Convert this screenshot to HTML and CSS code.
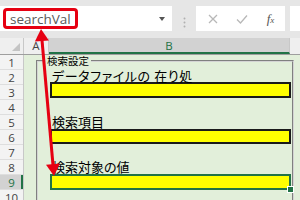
FILE: index.html
```html
<!DOCTYPE html>
<html lang="ja">
<head>
    <meta charset="UTF-8">
    <meta name="viewport" content="width=device-width, initial-scale=1.0">
    <title>検索設定</title>
    <link rel="stylesheet" href="styles.css">
</head>
<body>
    <div class="app">
        <div class="toolbar">
            <div class="namebox">
                <span class="name">searchVal</span>
                <span class="caret"></span>
            </div>
            <div class="grip">
                <svg width="3" height="11" viewBox="0 0 3 11"><circle cx="1.5" cy="1.5" r="1" fill="#b0b0b0"/><circle cx="1.5" cy="5.5" r="1" fill="#b0b0b0"/><circle cx="1.5" cy="9.5" r="1" fill="#b0b0b0"/></svg>
            </div>
            <div class="fxbtns">
                <div class="btn">
                    <svg width="10" height="10" viewBox="0 0 10 10"><path d="M1 1L9 9M9 1L1 9" stroke="#b8b8b8" stroke-width="1.3"/></svg>
                </div>
                <div class="btn">
                    <svg width="12" height="10" viewBox="0 0 12 10"><path d="M1 5.5L4.5 9L11 1.5" fill="none" stroke="#b8b8b8" stroke-width="1.3"/></svg>
                </div>
                <div class="btn"><span class="fx">f<small>x</small></span></div>
            </div>
            <div class="formula"></div>
        </div>

        <div class="colheads">
            <div class="corner"><span class="tri"></span></div>
            <div class="colh">A</div>
            <div class="colh sel">B</div>
            <div class="colh rest"></div>
        </div>

        <div class="sheet">
            <div class="rownums">
                <div class="rownum">1</div>
                <div class="rownum">2</div>
                <div class="rownum">3</div>
                <div class="rownum">4</div>
                <div class="rownum">5</div>
                <div class="rownum">6</div>
                <div class="rownum">7</div>
                <div class="rownum">8</div>
                <div class="rownum sel">9</div>
                <div class="rownum">10</div>
            </div>
            <div class="cells">
                <fieldset class="group">
                    <legend>検索設定</legend>
                    <div class="label wide">データファイルの 在り処</div>
                    <div class="input"></div>
                    <div class="label second">検索項目</div>
                    <div class="input short"></div>
                    <div class="label third">検索対象の値</div>
                    <div class="input active"></div>
                </fieldset>
            </div>
        </div>

        <svg class="arrow" width="300" height="200" viewBox="0 0 300 200">
            <line x1="41.9" y1="39" x2="53" y2="165" stroke="#e60012" stroke-width="3"/>
            <polygon points="41,29 48.9,40.4 34.9,41.6" fill="#e60012"/>
            <polygon points="54,176 59.9,163.4 46,164.7" fill="#e60012"/>
        </svg>
    </div>
</body>
</html>
```

FILE: styles.css
```css
body {
    margin: 0;
    font-family: "Open Sans", "Noto Sans CJK JP", sans-serif;
}

.app {
    width: 300px;
    height: 200px;
    overflow: hidden;
    position: relative;
    background: #e6e6e6;
}

/* name box + formula bar */
.toolbar {
    display: flex;
    height: 38px;
    box-sizing: border-box;
    padding-top: 6px;
}

.namebox {
    width: 172px;
    height: 25px;
    background: #fff;
    display: flex;
    align-items: center;
    box-sizing: border-box;
    padding-left: 3px;
}

.name {
    display: flex;
    align-items: center;
    width: 75px;
    height: 21px;
    box-sizing: border-box;
    border: 3px solid #e60012;
    border-radius: 4px;
    padding-left: 4px;
    font-size: 13.5px;
    color: #5a5a5a;
}

.caret {
    margin-left: auto;
    margin-right: 7px;
    border-left: 3px solid transparent;
    border-right: 3px solid transparent;
    border-top: 4px solid #555;
}

.grip {
    width: 24px;
    display: flex;
    align-items: center;
    justify-content: center;
}

.fxbtns {
    width: 89px;
    height: 25px;
    background: #fff;
    display: flex;
    box-sizing: border-box;
    padding-left: 2px;
}

.btn {
    width: 29px;
    display: flex;
    align-items: center;
    justify-content: center;
}

.fx {
    font-family: "Liberation Serif", serif;
    font-style: italic;
    font-size: 13px;
    color: #555;
}

.fx small {
    font-size: 9px;
}

.formula {
    flex: 1;
    height: 25px;
    margin-left: 5px;
    background: #fff;
}

/* column headers */
.colheads {
    display: flex;
    height: 17px;
    box-sizing: border-box;
    border-bottom: 1px solid #9e9e9e;
    font-size: 11.5px;
}

.corner {
    width: 24px;
    background: #efefef;
    border-right: 1px solid #c8c8c8;
    box-sizing: border-box;
    position: relative;
}

.tri {
    position: absolute;
    right: 3px;
    bottom: 3px;
    border-left: 8px solid transparent;
    border-bottom: 8px solid #c4c4c4;
}

.colh {
    width: 25px;
    background: #efefef;
    border-right: 1px solid #c8c8c8;
    box-sizing: border-box;
    text-align: center;
    line-height: 16px;
    color: #444;
}

.colh.sel {
    width: 241px;
    background: #d2d2d2;
    color: #217346;
    border-bottom: 2px solid #217346;
    line-height: 16px;
}

.colh.rest {
    flex: 1;
    border-right: none;
}

/* sheet */
.sheet {
    display: flex;
    height: 145px;
}

.rownums {
    width: 24px;
    background: #f3f3f3;
    border-right: 1px solid #c8c8c8;
    box-sizing: border-box;
}

.rownum {
    height: 15px;
    box-sizing: border-box;
    border-bottom: 1px solid #dedede;
    text-align: center;
    font-size: 11.5px;
    line-height: 15px;
    color: #444;
}

.rownum.sel {
    background: #d2d2d2;
    color: #217346;
    box-shadow: inset -2px 0 #217346;
}

.cells {
    flex: 1;
    background: #e2efda;
}

.group {
    margin: 0 0 0 12px;
    padding: 0;
    width: 258px;
    height: 170px;
    box-sizing: border-box;
    border: 2px groove #d4d4d4;
    min-width: 0;
}

.group legend {
    margin-left: 7px;
    padding: 0 2px;
    font-family: "Noto Sans CJK JP", sans-serif;
    font-size: 10.5px;
    line-height: 11px;
}

.label {
    height: 16px;
    margin-left: 14px;
    font-family: "Noto Sans CJK JP", sans-serif;
    font-feature-settings: "palt";
    font-size: 13px;
    line-height: 18px;
    white-space: nowrap;
}

.label.wide {
    margin-top: 1px;
    height: 15px;
    letter-spacing: 0.6px;
}

.label.second {
    margin-top: 15px;
}

.label.third {
    margin-top: 14px;
}

.input {
    width: 241px;
    height: 16px;
    margin-left: 12px;
    box-sizing: border-box;
    background: #ffff00;
    border: 2px solid #1a1a1a;
}

.input.short {
    height: 15px;
}

.input.active {
    position: relative;
    border-color: #217346;
}

.input.active::after {
    content: "";
    position: absolute;
    right: -5px;
    bottom: -5px;
    width: 5px;
    height: 5px;
    background: #217346;
    border: 1px solid #fff;
}

.arrow {
    position: absolute;
    top: 0;
    left: 0;
    pointer-events: none;
}
```
